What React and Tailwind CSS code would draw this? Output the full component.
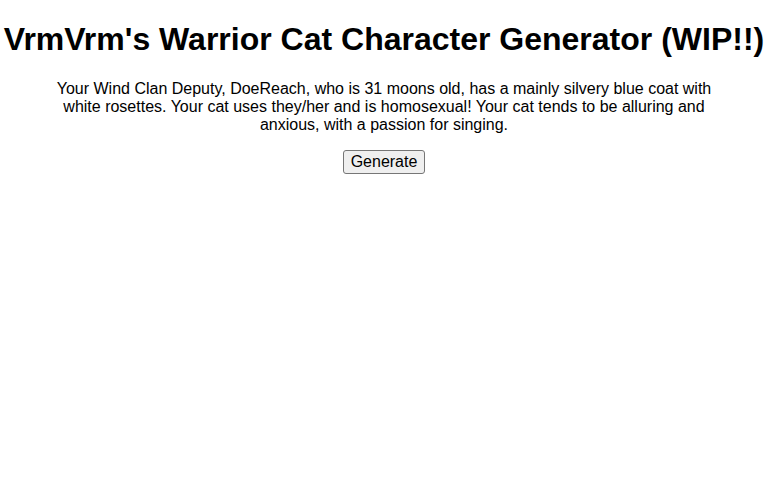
export default function App() {
  return (
    <div className="min-h-screen bg-white text-black text-center font-['Liberation_Sans',Arial,sans-serif]">
      <h1 className="pt-[21.44px] text-[32px] font-bold leading-[normal] whitespace-nowrap">
        VrmVrm's Warrior Cat Character Generator (WIP!!)
      </h1>
      <p className="mx-auto mt-[21.44px] w-[680px] text-[16px] leading-[normal]">
        Your Wind Clan Deputy, DoeReach, who is 31 moons old, has a mainly silvery blue coat with white rosettes. Your cat uses they/her and is homosexual! Your cat tends to be alluring and anxious, with a passion for singing.
      </p>
      <div className="mt-4">
        <button className="bg-[#efefef] border border-[#767676] rounded-[3px] px-[7px] py-[2px] text-[16px] leading-[normal] text-black">
          Generate
        </button>
      </div>
    </div>
  );
}
